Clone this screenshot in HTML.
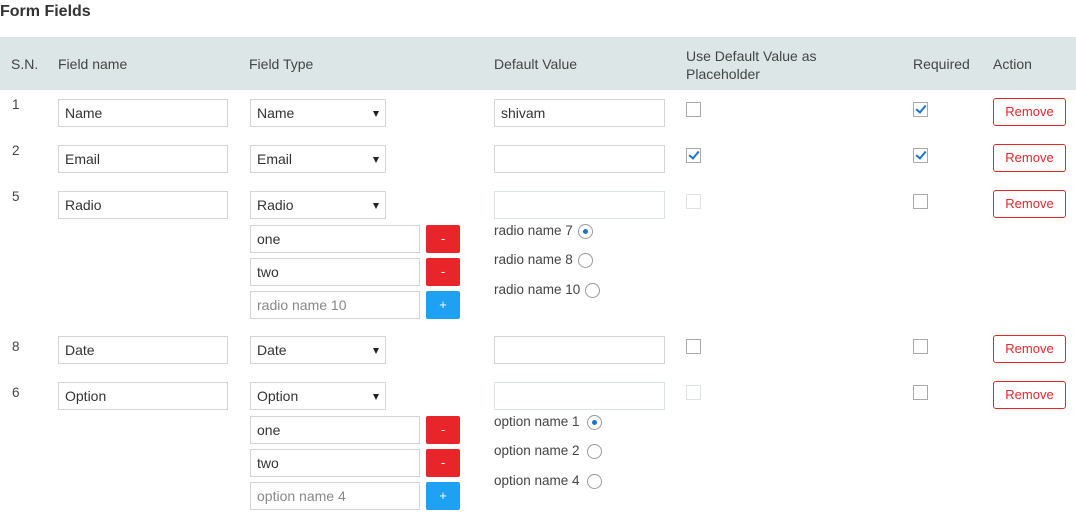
<!DOCTYPE html>
<html><head><style>
body{margin:0;width:1076px;height:516px;background:#fff;font-family:"Liberation Sans",sans-serif;font-size:14px;color:#333;position:relative;overflow:hidden}
.a{position:absolute}
.t{position:absolute;font-size:14px;color:#444}
.in{position:absolute;box-sizing:border-box;border:1px solid #d4d4d8;background:#fff;height:28px;padding:0 6px;line-height:26px;font-size:14px;color:#333}
.ph{color:#888}
.dv{border-color:#dde4e4}
.sel:after{content:"";position:absolute;right:6px;top:11px;border-left:3.5px solid transparent;border-right:3.5px solid transparent;border-top:6px solid #222}
.cb{position:absolute;width:15px;height:15px;box-sizing:border-box;border:1px solid #aaa;background:#fff}
.cb.dis{border-color:#dde3e3}
.cb.on:after{content:"";position:absolute;left:4px;top:0px;width:4px;height:8px;border:solid #1a75c9;border-width:0 2px 2px 0;transform:rotate(40deg)}
.rm{position:absolute;box-sizing:border-box;width:73px;height:28px;border:1px solid #e8262a;border-radius:3px;color:#e8262a;font-size:13px;text-align:center;line-height:26px}
.bt{position:absolute;width:34px;height:28px;color:#fff;text-align:center;line-height:28px;font-size:13px;border-radius:2px}
.red{background:#e8262a}.blue{background:#1ea1f2}
.rd{position:absolute;width:15px;height:15px;box-sizing:border-box;border:1px solid #999;border-radius:50%;background:#fff}
.rd.on:after{content:"";position:absolute;left:4px;top:4px;width:5px;height:5px;border-radius:50%;background:#1a75c9}
.lb{position:absolute;font-size:13.5px;color:#444}
</style></head><body>
<div class="a" style="left:0;top:3px;font-size:16px;font-weight:bold;color:#333">Form Fields</div>
<div class="a" style="left:0;top:37px;width:1076px;height:53px;background:#dde6e6"></div>
<div class="t" style="left:11px;top:56px">S.N.</div>
<div class="t" style="left:58px;top:56px">Field name</div>
<div class="t" style="left:249px;top:56px">Field Type</div>
<div class="t" style="left:494px;top:56px">Default Value</div>
<div class="t" style="left:686px;top:47px;line-height:18px">Use Default Value as<br>Placeholder</div>
<div class="t" style="left:913px;top:56px">Required</div>
<div class="t" style="left:993px;top:56px">Action</div>

<div class="lb" style="left:12px;top:97px">1</div>
<div class="in" style="left:58px;top:99px;width:170px">Name</div>
<div class="in sel" style="left:250px;top:99px;width:136px">Name</div>
<div class="in" style="left:494px;top:99px;width:171px">shivam</div>
<div class="cb" style="left:686px;top:102px"></div>
<div class="cb on" style="left:913px;top:102px"></div>
<div class="rm" style="left:993px;top:98px">Remove</div>

<div class="lb" style="left:12px;top:143px">2</div>
<div class="in" style="left:58px;top:145px;width:170px">Email</div>
<div class="in sel" style="left:250px;top:145px;width:136px">Email</div>
<div class="in" style="left:494px;top:145px;width:171px"></div>
<div class="cb on" style="left:686px;top:148px"></div>
<div class="cb on" style="left:913px;top:148px"></div>
<div class="rm" style="left:993px;top:144px">Remove</div>

<div class="lb" style="left:12px;top:189px">5</div>
<div class="in" style="left:58px;top:191px;width:170px">Radio</div>
<div class="in sel" style="left:250px;top:191px;width:136px">Radio</div>
<div class="in dv" style="left:494px;top:191px;width:171px"></div>
<div class="cb dis" style="left:686px;top:194px"></div>
<div class="cb" style="left:913px;top:194px"></div>
<div class="rm" style="left:993px;top:190px">Remove</div>
<div class="in" style="left:250px;top:225px;width:170px">one</div>
<div class="bt red" style="left:426px;top:225px">-</div>
<div class="in" style="left:250px;top:258px;width:170px">two</div>
<div class="bt red" style="left:426px;top:258px">-</div>
<div class="in ph" style="left:250px;top:291px;width:170px">radio name 10</div>
<div class="bt blue" style="left:426px;top:291px">+</div>
<div class="lb" style="left:494px;top:223px">radio name 7</div><div class="rd on" style="left:578px;top:224px"></div>
<div class="lb" style="left:494px;top:252px">radio name 8</div><div class="rd" style="left:578px;top:253px"></div>
<div class="lb" style="left:494px;top:282px">radio name 10</div><div class="rd" style="left:585px;top:283px"></div>

<div class="lb" style="left:12px;top:339px">8</div>
<div class="in" style="left:58px;top:336px;width:170px">Date</div>
<div class="in sel" style="left:250px;top:336px;width:136px">Date</div>
<div class="in" style="left:494px;top:336px;width:171px"></div>
<div class="cb" style="left:686px;top:339px"></div>
<div class="cb" style="left:913px;top:339px"></div>
<div class="rm" style="left:993px;top:335px">Remove</div>

<div class="lb" style="left:12px;top:385px">6</div>
<div class="in" style="left:58px;top:382px;width:170px">Option</div>
<div class="in sel" style="left:250px;top:382px;width:136px">Option</div>
<div class="in dv" style="left:494px;top:382px;width:171px"></div>
<div class="cb dis" style="left:686px;top:385px"></div>
<div class="cb" style="left:913px;top:385px"></div>
<div class="rm" style="left:993px;top:381px">Remove</div>
<div class="in" style="left:250px;top:416px;width:170px">one</div>
<div class="bt red" style="left:426px;top:416px">-</div>
<div class="in" style="left:250px;top:449px;width:170px">two</div>
<div class="bt red" style="left:426px;top:449px">-</div>
<div class="in ph" style="left:250px;top:482px;width:170px">option name 4</div>
<div class="bt blue" style="left:426px;top:482px">+</div>
<div class="lb" style="left:494px;top:414px">option name 1</div><div class="rd on" style="left:587px;top:415px"></div>
<div class="lb" style="left:494px;top:443px">option name 2</div><div class="rd" style="left:587px;top:444px"></div>
<div class="lb" style="left:494px;top:473px">option name 4</div><div class="rd" style="left:587px;top:474px"></div>
</body></html>
